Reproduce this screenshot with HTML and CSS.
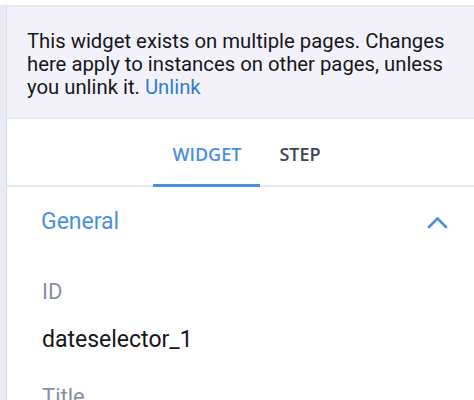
FILE: index.html
```html
<!DOCTYPE html>
<html>
<head>
<meta charset="utf-8">
<link rel="stylesheet" href="styles.css">
</head>
<body>
<div class="frame">
  <div class="rail"></div>
  <div class="panel">
    <div class="banner">This widget exists on multiple pages. Changes here apply to instances on other pages, unless you unlink it. <a class="link">Unlink</a></div>
    <div class="tabs">
      <div class="tab active">WIDGET</div>
      <div class="tab">STEP</div>
    </div>
    <div class="section-head">
      <span class="section-title">General</span>
      <svg class="chev" width="21" height="13" viewBox="0 0 21 13"><path d="M2 11 L10.5 2.5 L19 11" fill="none" stroke="#4a90e2" stroke-width="2.6" stroke-linecap="round" stroke-linejoin="round"/></svg>
    </div>
    <div class="field">
      <div class="label">ID</div>
      <div class="value">dateselector_1</div>
    </div>
    <div class="field">
      <div class="label">Title</div>
    </div>
  </div>
</div>
</body>
</html>
```
FILE: styles.css
```css
html, body {
  margin: 0;
  padding: 0;
  background: #fff;
}
body {
  font-family: Roboto, "Open Sans", sans-serif;
  color: #16161c;
  width: 474px;
  height: 400px;
  overflow: hidden;
}
.frame {
  display: flex;
  height: 400px;
  padding-top: 5px;
  box-sizing: border-box;
}
.rail {
  width: 6px;
  background: #e8ebf3;
  border-right: 1px solid #d9dee8;
  flex: none;
}
.panel {
  flex: 1;
  border-top: 2px solid #e6e9f0;
}
.banner {
  background: #f3f2fb;
  padding: 23px 20px 18px 20px;
  font-size: 20.3px;
  line-height: 23px;
  border-bottom: 2px solid #e8ebf1;
}
.link {
  color: #2f7dd0;
}
.tabs {
  display: flex;
  justify-content: center;
  padding-top: 24px;
  padding-left: 12px;
  border-bottom: 2px solid #e6e9f0;
  font-family: "Open Sans", sans-serif;
}
.tab {
  font-size: 18px;
  font-weight: 600;
  color: #3a4656;
  padding: 0 19px 19px;
  line-height: 22px;
  margin-bottom: -2px;
  border-bottom: 3px solid transparent;
}
.tab.active {
  color: #4a90e2;
  border-bottom-color: #4a90e2;
}
.section-head {
  display: flex;
  align-items: center;
  justify-content: space-between;
  padding: 20px 26px 0 34px;
  height: 30px;
}
.section-title {
  font-size: 23px;
  line-height: 30px;
  color: #4a90e2;
}
.chev {
  display: block;
}
.field {
  padding: 0 0 0 35px;
  margin-top: 42px;
}
.label {
  font-size: 22px;
  color: #8591a5;
  line-height: 26px;
}
.value {
  font-size: 23px;
  color: #16161c;
  margin-top: 21px;
  line-height: 28px;
}
.field + .field {
  margin-top: 30px;
}
```
